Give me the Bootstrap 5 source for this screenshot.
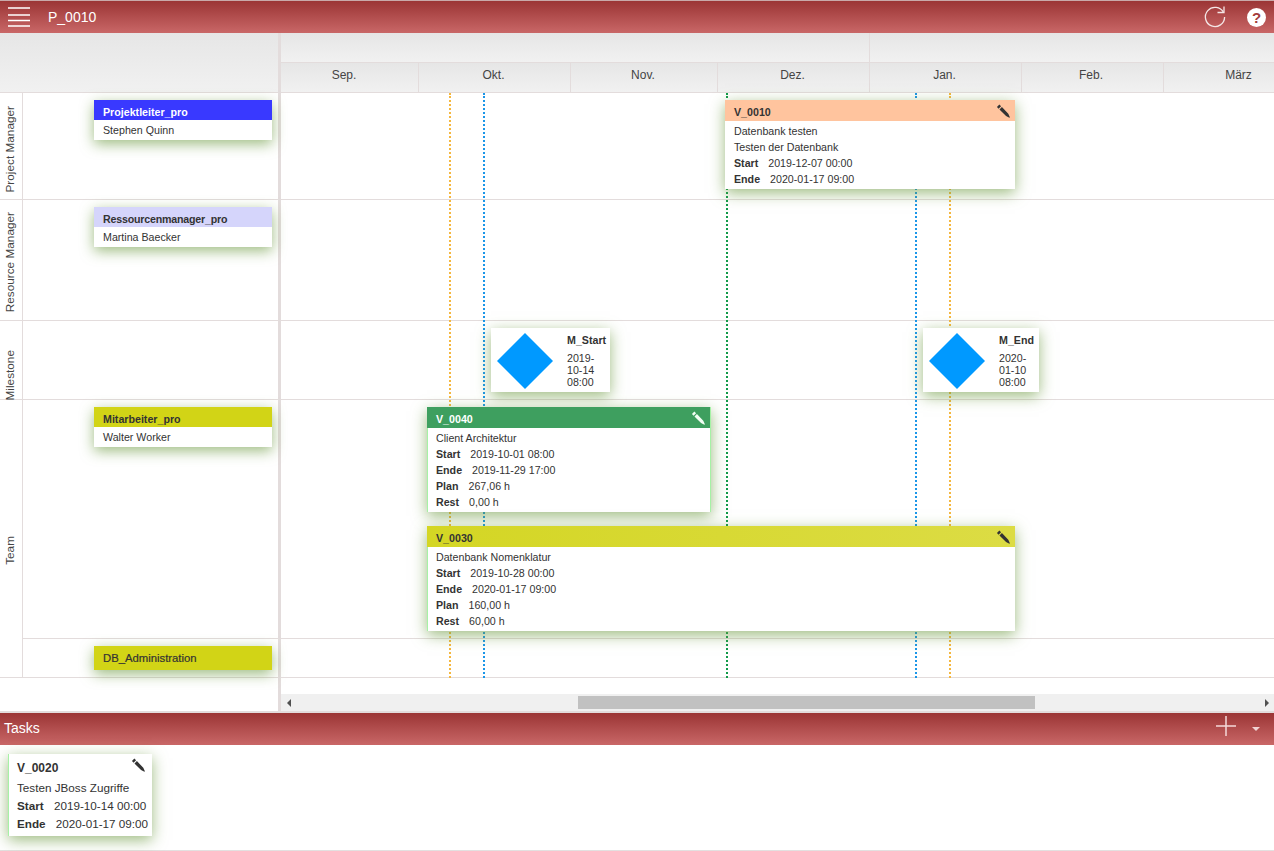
<!DOCTYPE html>
<html lang="de">
<head>
  <meta charset="UTF-8">
  <title>P_0010</title>
  <link href="https://cdn.jsdelivr.net/npm/bootstrap@5.3.3/dist/css/bootstrap.min.css" rel="stylesheet">
  <style>
    html, body { height: 100%; overflow: hidden; }
    body { font-family: "Liberation Sans", Arial, sans-serif; font-size: 10.67px; color: #333; background: #fff; }
    .red-bar { background: linear-gradient(#9b3535, #c96767); color: #fff; }
    .top-bar { height: 33px; font-size: 14px; border-top: 1px solid #c9a9a9; }
    .burger { width: 22px; height: 20px; margin: 0 18px 0 8px; }
    .refresh { width: 24px; height: 24px; margin-right: 20px; }
    .help-dot { width: 19px; height: 19px; margin-right: 8px; border-radius: 50%; background: #fff; color: #a33c3c; font-weight: 700; font-size: 15px; line-height: 19px; text-align: center; }

    .plan { height: 678px; }
    .left-pane { width: 281px; flex: none; border-right: 3px solid #e3dcdc; }
    .right-pane { min-width: 0; flex: 1; position: relative; overflow: hidden; }
    .head-grad { background: linear-gradient(#e6e6e6, #f1f1f1); }
    .left-head { height: 60px; border-bottom: 1px solid #e3dcdc; }
    .year-row { height: 29px; }
    .year-a { width: 589px; border-right: 1px solid #e3dcdc; }
    .month-row { height: 31px; width: 1100px; border-top: 1px solid #e3dcdc; border-bottom: 1px solid #e3dcdc; font-size: 12px; line-height: 24px; text-align: center; color: #444; }
    .month-row > div { border-right: 1px solid #e3dcdc; flex: none; height: 100%; padding-right: 2px; }
    .m1 { width: 138px; } .m2 { width: 152px; } .m3 { width: 147px; } .m4 { width: 152px; }
    .m5 { width: 152px; } .m6 { width: 142px; } .m7 { width: 150px; }
    .month-row > .m1 { padding-right: 11px; }
    .month-row > .m6 { padding-right: 3px; } .month-row > .m7 { padding-right: 0; }

    .lane-lines { border-bottom: 1px solid #e3dcdc; }
    .h-pm { height: 107px; } .h-rm { height: 121px; } .h-ms { height: 79px; } .h-team { height: 239px; } .h-db { height: 39px; }
    .h-teamall { height: 278px; }
    .lane-title { width: 23px; flex: none; border-right: 1px solid #e3dcdc; font-size: 11.8px; color: #444; display: flex; justify-content: center; align-items: flex-start; }
    .lane-title span { writing-mode: vertical-rl; transform: rotate(180deg); white-space: nowrap; }
    .t-pm span { margin-top: 13px; } .t-rm span { margin-top: 12px; } .t-ms span { margin-top: 29px; } .t-team span { margin-top: 136px; }
    .lane-body { padding: 7px 6px 0 0; display: flex; justify-content: flex-end; }

    .role-box { width: 178px; background: #fff; box-shadow: 0 4px 14px rgba(105, 150, 60, .65); height: 40px; }
    .role-head { height: 20px; padding: 0 9px; line-height: 24px; font-weight: 700; }
    .role-body { padding: 0 9px; line-height: 20px; }
    .role-flat { height: 24px; }
    .role-flat .role-head { height: 24px; font-weight: 400; font-size: 11.3px; -webkit-text-stroke: .2px #333; }
    .c-blue { background: #3939ff; color: #fff; }
    .c-lilac { background: #d5d5fb; letter-spacing: -.2px; }
    .c-olive { background: #d2d416; }

    .guide { position: absolute; top: 60px; height: 585px; width: 0; border-left: 2px dotted; }
    .g1 { left: 168px; border-color: #f5b73f; }
    .g2 { left: 202px; border-color: #1b96e8; }
    .g3 { left: 445px; border-color: #119a49; }
    .g4 { left: 634px; border-color: #1b96e8; }
    .g5 { left: 668px; border-color: #f5b73f; }

    .task-box { position: absolute; background: #fff; box-shadow: 0 4px 14px rgba(105, 150, 60, .65); line-height: 16px; }
    .task-head { height: 21px; padding: 0 9px; font-weight: 700; line-height: 25px; display: flex; justify-content: space-between; }
    .task-text { padding: 2px 9px 0; }
    .task-text b { margin-right: 7px; }
    .pen { width: 15px; height: 15px; margin: 3.5px -5px 0 0; }
    .b-green .task-text { border-left: 1px solid #a6f2a6; padding-left: 8px; height: 84px; }
    .b-both { border-right: 1px solid #a6f2a6; }
    .v10 { left: 444px; top: 67px; width: 290px; height: 89px; }
    .v40 { left: 146px; top: 374px; width: 284px; height: 105px; }
    .v30 { left: 146px; top: 493px; width: 588px; height: 105px; }
    .h-peach { background: #ffc49e; }
    .h-green { background: #3e9f5f; color: #fff; }
    .h-lime { background: linear-gradient(90deg, #d4d624, #dcdc44); }

    .stone { position: absolute; top: 295px; height: 64px; background: #fff; box-shadow: 0 4px 14px rgba(105, 150, 60, .65); display: flex; line-height: 12px; }
    .st1 { left: 210px; width: 119px; } .st2 { left: 642px; width: 116px; }
    .stone svg { width: 56px; height: 56px; margin: 5px 14px 0 6px; flex: none; }
    .stone-text { width: 38px; padding-top: 6px; }
    .stone-text b { display: block; margin-bottom: 6px; white-space: nowrap; }

    .h-scroll { position: absolute; left: 0; right: 0; top: 661px; height: 17px; background: #f0f0f0; }
    .h-thumb { position: absolute; left: 297px; width: 457px; top: 2px; height: 13px; background: #c1c1c1; }
    .arrow-l, .arrow-r { position: absolute; top: 5px; width: 0; height: 0; border-top: 4px solid transparent; border-bottom: 4px solid transparent; }
    .arrow-l { left: 6px; border-right: 4px solid #505050; }
    .arrow-r { right: 5px; border-left: 4px solid #505050; }

    .split-line { height: 2px; background: #e3dcdc; }
    .tasks-bar { height: 32px; font-size: 14px; padding-left: 4px; padding-bottom: 2px; }
    .plus-icon { width: 22px; height: 22px; margin: 0 15px 4px 0; }
    .caret-icon { width: 0; height: 0; border-left: 4.5px solid transparent; border-right: 4.5px solid transparent; border-top: 4.5px solid #f2d4d4; margin: 2px 14px 0 0; }
    .tasks-area { height: 106px; padding: 9px 8px; border-bottom: 1px solid #e3e0e0; }
    .free-task { position: relative; width: 144px; height: 82px; background: #fff; border-left: 1px solid #a6f2a6; box-shadow: 0 4px 14px rgba(105, 150, 60, .65); font-size: 11.7px; line-height: 18px; padding: 4px 0 0 8px; white-space: nowrap; }
    .free-task .pen { position: absolute; right: 6px; top: 1px; margin: 3px 0 0 0; }
    .free-title { font-weight: 700; font-size: 12px; height: 21px; line-height: 20px; }
    .free-task b { margin-right: 7px; }
  </style>
</head>
<body>
  <div class="red-bar top-bar d-flex align-items-center">
    <svg class="burger" viewBox="0 0 22 20"><path d="M0 1h22M0 8h22M0 13.5h22M0 19h22" stroke="#fff" stroke-width="1.6" fill="none"/></svg>
    <span class="flex-grow-1">P_0010</span>
    <svg class="refresh" viewBox="0 0 24 24" fill="none" stroke="#f4e6e6" stroke-width="1.3"><path d="M20.5 7.5A9.6 9.6 0 1 0 21.6 12"/><path d="M14.5 7.5h6.5V1.5"/></svg>
    <div class="help-dot">?</div>
  </div>

  <div class="plan d-flex">
    <div class="left-pane">
      <div class="left-head head-grad"></div>
      <div class="d-flex h-pm lane-lines">
        <div class="lane-title t-pm"><span>Project Manager</span></div>
        <div class="lane-body flex-grow-1">
          <div class="role-box"><div class="role-head c-blue">Projektleiter_pro</div><div class="role-body">Stephen Quinn</div></div>
        </div>
      </div>
      <div class="d-flex h-rm lane-lines">
        <div class="lane-title t-rm"><span>Resource Manager</span></div>
        <div class="lane-body flex-grow-1">
          <div class="role-box"><div class="role-head c-lilac">Ressourcenmanager_pro</div><div class="role-body">Martina Baecker</div></div>
        </div>
      </div>
      <div class="d-flex h-ms lane-lines">
        <div class="lane-title t-ms"><span>Milestone</span></div>
        <div class="flex-grow-1"></div>
      </div>
      <div class="d-flex h-teamall lane-lines">
        <div class="lane-title t-team"><span>Team</span></div>
        <div class="flex-grow-1">
          <div class="h-team lane-lines lane-body">
            <div class="role-box"><div class="role-head c-olive">Mitarbeiter_pro</div><div class="role-body">Walter Worker</div></div>
          </div>
          <div class="lane-body">
            <div class="role-box role-flat"><div class="role-head c-olive">DB_Administration</div></div>
          </div>
        </div>
      </div>
    </div>

    <div class="right-pane">
      <div class="year-row d-flex head-grad"><div class="year-a"></div></div>
      <div class="month-row d-flex head-grad">
        <div class="m1">Sep.</div><div class="m2">Okt.</div><div class="m3">Nov.</div><div class="m4">Dez.</div><div class="m5">Jan.</div><div class="m6">Feb.</div><div class="m7">März</div>
      </div>
      <div class="h-pm lane-lines"></div>
      <div class="h-rm lane-lines"></div>
      <div class="h-ms lane-lines"></div>
      <div class="h-team lane-lines"></div>
      <div class="h-db lane-lines"></div>

      <div class="guide g1"></div><div class="guide g2"></div><div class="guide g3"></div><div class="guide g4"></div><div class="guide g5"></div>

      <div class="task-box v10">
        <div class="task-head h-peach"><span>V_0010</span><svg class="pen" viewBox="0 0 16 16"><use href="#pencil" fill="#333"/></svg></div>
        <div class="task-text">Datenbank testen<br>Testen der Datenbank<br><b>Start</b> 2019-12-07 00:00<br><b>Ende</b> 2020-01-17 09:00</div>
      </div>

      <div class="stone st1">
        <svg viewBox="0 0 56 56"><path d="M28 0 56 28 28 56 0 28Z" fill="#0099ff"/></svg>
        <div class="stone-text"><b>M_Start</b>2019-10-14 08:00</div>
      </div>
      <div class="stone st2">
        <svg viewBox="0 0 56 56"><path d="M28 0 56 28 28 56 0 28Z" fill="#0099ff"/></svg>
        <div class="stone-text"><b>M_End</b>2020-01-10 08:00</div>
      </div>

      <div class="task-box v40 b-green b-both">
        <div class="task-head h-green"><span>V_0040</span><svg class="pen" viewBox="0 0 16 16"><use href="#pencil" fill="#f2fff4"/></svg></div>
        <div class="task-text">Client Architektur<br><b>Start</b> 2019-10-01 08:00<br><b>Ende</b> 2019-11-29 17:00<br><b>Plan</b> 267,06 h<br><b>Rest</b> 0,00 h</div>
      </div>

      <div class="task-box v30 b-green">
        <div class="task-head h-lime"><span>V_0030</span><svg class="pen" viewBox="0 0 16 16"><use href="#pencil" fill="#333"/></svg></div>
        <div class="task-text">Datenbank Nomenklatur<br><b>Start</b> 2019-10-28 00:00<br><b>Ende</b> 2020-01-17 09:00<br><b>Plan</b> 160,00 h<br><b>Rest</b> 60,00 h</div>
      </div>

      <div class="h-scroll"><div class="arrow-l"></div><div class="h-thumb"></div><div class="arrow-r"></div></div>
    </div>
  </div>

  <div class="split-line"></div>
  <div class="red-bar tasks-bar d-flex align-items-center">
    <span class="flex-grow-1">Tasks</span>
    <svg class="plus-icon" viewBox="0 0 22 22"><path d="M11 1v20M1 11h20" stroke="#f5d9d9" stroke-width="1.5" fill="none"/></svg>
    <div class="caret-icon"></div>
  </div>
  <div class="tasks-area">
    <div class="free-task">
      <svg class="pen" viewBox="0 0 16 16"><use href="#pencil" fill="#333"/></svg>
      <div class="free-title">V_0020</div>
      Testen JBoss Zugriffe<br><b>Start</b> 2019-10-14 00:00<br><b>Ende</b> 2020-01-17 09:00
    </div>
  </div>

  <svg width="0" height="0" class="position-absolute">
    <symbol id="pencil" viewBox="0 0 16 16"><path d="M3.6.6 1 3.2l1.8 1.8 2.6-2.6ZM6.3 3.3 3.7 5.9l7 7 3.6 1.7.5-.5-1.7-3.6Z"/></symbol>
  </svg>

  <script src="https://cdn.jsdelivr.net/npm/bootstrap@5.3.3/dist/js/bootstrap.bundle.min.js"></script>
</body>
</html>
